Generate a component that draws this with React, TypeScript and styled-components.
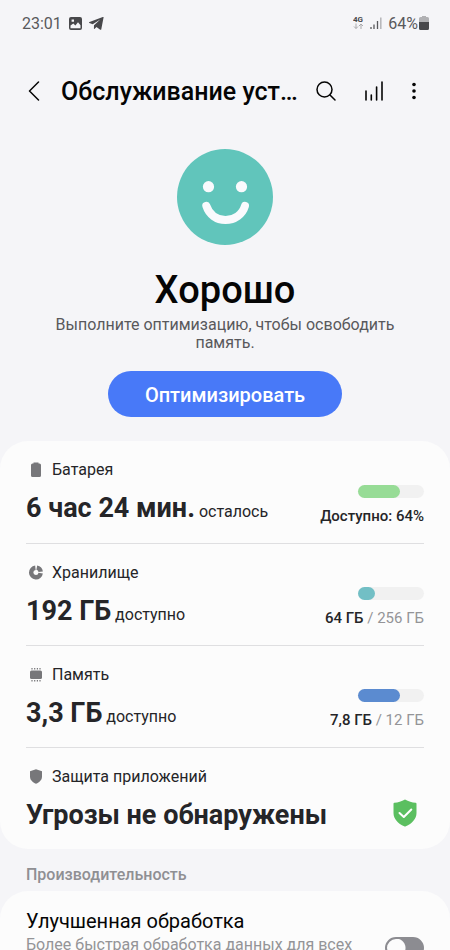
import React from 'react';
import styled, { createGlobalStyle } from 'styled-components';

const GlobalStyle = createGlobalStyle`
  *, *::before, *::after { box-sizing: border-box; }
  body { margin: 0; background: #f5f5f8; }
  h1, h2, p { margin: 0; }
  button { border: 0; padding: 0; background: none; color: inherit; font: inherit; cursor: pointer; }
`;

const Page = styled.div`
  height: 100vh;
  overflow-y: auto;
  scrollbar-width: none;
  background: #f5f5f8;
  color: #252528;
  font-family: Roboto, "Noto Sans", sans-serif;
`;

const StatusBar = styled.div`
  display: flex;
  justify-content: space-between;
  align-items: center;
  height: 46px;
  padding: 0 21px 0 22px;
  font-size: 16px;
  color: #59595c;
`;

const StatusGroup = styled.div<{ $gap: number }>`
  display: flex;
  align-items: center;
  gap: ${({ $gap }) => $gap}px;
`;

const Charge = styled.span`
  display: flex;
  align-items: center;
  gap: 1px;
`;

const AppBar = styled.header`
  display: flex;
  align-items: center;
  height: 90px;
  padding: 0 21px 0 18px;
  color: #050505;
`;

const BarTitle = styled.h1`
  flex: 1;
  min-width: 0;
  margin: 2px 4px 0 11px;
  font-size: 25px;
  line-height: 32px;
  font-weight: 500;
  white-space: nowrap;
  overflow: hidden;
  text-overflow: ellipsis;
`;

const IconButton = styled.button<{ $width: number }>`
  display: flex;
  align-items: center;
  justify-content: center;
  flex: none;
  width: ${({ $width }) => $width}px;
  height: 40px;
`;

const Summary = styled.section`
  display: flex;
  flex-direction: column;
  align-items: center;
  padding: 13px 40px 24px;
  text-align: center;
`;

const Verdict = styled.h2`
  margin-top: 23px;
  font-size: 38px;
  line-height: 44px;
  font-weight: 500;
  color: #050505;
`;

const Advice = styled.p`
  margin-top: 4px;
  font-size: 16px;
  line-height: 18px;
  color: #59595c;
`;

const OptimizeButton = styled.button`
  && {
    width: 234px;
    height: 46px;
    margin-top: 19px;
    padding-top: 1px;
    border-radius: 23px;
    background: #4879f8;
    color: #fff;
    font-size: 20px;
    font-weight: 500;
  }
`;

const Card = styled.section`
  padding: 0 26px;
  border-radius: 28px;
  background: #fcfcfc;
`;

const Row = styled.div`
  display: flex;
  justify-content: space-between;
  align-items: flex-end;
  height: 102px;
  padding: 18px 0;
  &:first-child { height: 103px; }
  &:last-child { height: 101px; }
  & + & { box-shadow: 0 -1px #dfdfe1; }
`;

const RowMain = styled.div`
  align-self: flex-start;
  white-space: nowrap;
`;

const RowLabel = styled.div`
  display: flex;
  align-items: center;
  gap: 6px;
  font-size: 16px;
  line-height: 22px;
`;

const RowValue = styled.div`
  margin-top: 11px;
  font-size: 16px;
  line-height: 32px;
`;

const Strong = styled.strong`
  font-size: 27px;
  font-weight: 700;
`;

const Usage = styled.div`
  display: flex;
  flex-direction: column;
  align-items: flex-end;
  gap: 8px;
  font-size: 15px;
  line-height: 20px;
  color: #949497;
  white-space: nowrap;
`;

const UsageStrong = styled.b`
  font-weight: 500;
  color: #252528;
`;

const Track = styled.div`
  width: 66px;
  height: 13px;
  border-radius: 7px;
  background: #f1f1f1;
`;

const Fill = styled.div<{ $color: string }>`
  height: 100%;
  border-radius: 7px;
  background: ${({ $color }) => $color};
`;

const ShieldSlot = styled.div`
  display: flex;
  padding: 0 7px 4px 0;
`;

const SectionTitle = styled.h2`
  padding: 10px 26px 0;
  height: 42px;
  font-size: 16px;
  line-height: 32px;
  font-weight: 500;
  color: #8f8f93;
`;

const Setting = styled.label`
  display: flex;
  justify-content: space-between;
  align-items: center;
  gap: 28px;
  padding: 16px 0;
`;

const SettingTitle = styled.span`
  display: block;
  font-size: 20px;
  line-height: 28px;
  color: #050505;
`;

const SettingNote = styled.span`
  display: block;
  font-size: 16px;
  line-height: 19px;
  color: #949497;
`;

const Toggle = styled.input`
  appearance: none;
  flex: none;
  width: 39px;
  height: 22px;
  margin: 16px 0 0;
  border: 2px solid #8c8c91;
  border-radius: 11px;
  background: radial-gradient(circle at 9px 9px, #fcfcfc 9px, #8c8c91 10px);
  &:checked { background: radial-gradient(circle at 26px 9px, #fcfcfc 9px, #4879f8 10px); border-color: #4879f8; }
`;

const PictureIcon = () => (
  <svg width="13" height="13" viewBox="0 0 13 13" aria-hidden="true">
    <path fillRule="evenodd" fill="#48484b" d="M2 0h9a2 2 0 0 1 2 2v9a2 2 0 0 1-2 2H2a2 2 0 0 1-2-2V2a2 2 0 0 1 2-2zM1.5 8.5v2.8h10V8.2L9 5.300 6.400 8.500 4.300 6.400zM2.600 2.400v2.400h2.400V2.400z" />
  </svg>
);

const PlaneIcon = () => (
  <svg width="15" height="13" viewBox="0 0 15 13" aria-hidden="true">
    <path fill="#48484b" d="M14.600.3 12.300 12.300c-.1.6-.6.7-1.100.4L7.500 10 5.700 11.800c-.4.400-.8.200-.8-.3L5 8.200 11.300 2.500 3.700 7.200.4 6.100C-.2 5.900-.1 5.400.5 5.100L13.800.1c.5-.2.900 0 .8.200z" />
  </svg>
);

const NetworkIcon = () => (
  <svg width="11" height="14" viewBox="0 0 11 14" aria-hidden="true">
    <text x="0" y="6" fontSize="8" fontWeight="700" fontFamily="Roboto, sans-serif" fill="#48484b">4G</text>
    <path d="M3 7.500v5M1 10.500l2 2 2-2M8 13V8M6 10l2-2 2 2" fill="none" stroke="#aaaaad" />
  </svg>
);

const SignalIcon = () => (
  <svg width="12" height="12" viewBox="0 0 12 12" aria-hidden="true">
    <path d="M1 10v2M4 7.500V12M7.500 4v8" stroke="#59595c" strokeWidth="1.300" />
    <path d="M10.800.5V12" stroke="#b5b5b8" strokeWidth="1.500" />
  </svg>
);

const ChargeIcon = () => (
  <svg width="10" height="14" viewBox="0 0 10 14" aria-hidden="true">
    <path d="M3 0h4v1h1.500A1.500 1.500 0 0 1 10 2.500V6H0V2.500A1.500 1.500 0 0 1 1.500 1H3z" fill="#b1b1b4" />
    <path d="M0 6h10v6.500A1.500 1.500 0 0 1 8.500 14h-7A1.500 1.500 0 0 1 0 12.500z" fill="#48484b" />
  </svg>
);

const BackIcon = () => (
  <svg width="12" height="20" viewBox="0 0 12 20" fill="none" stroke="currentColor" strokeWidth="1.500" strokeLinecap="round" strokeLinejoin="round" aria-hidden="true">
    <path d="M10.500 1 1.500 10l9 9" />
  </svg>
);

const SearchIcon = () => (
  <svg width="20" height="20" viewBox="0 0 20 20" fill="none" stroke="currentColor" strokeWidth="1.500" strokeLinecap="round" aria-hidden="true">
    <circle cx="8.500" cy="8.500" r="7.500" />
    <path d="m14 14 5 5" />
  </svg>
);

const ChartIcon = () => (
  <svg width="18" height="20" viewBox="0 0 18 20" fill="none" stroke="currentColor" strokeWidth="1.600" strokeLinecap="round" aria-hidden="true">
    <path d="M1 10v9M6.300 14v5M11.600 6v13M17 1v18" />
  </svg>
);

const MoreIcon = () => (
  <svg width="4" height="18" viewBox="0 0 4 18" fill="currentColor" aria-hidden="true">
    <circle cx="2" cy="2.500" r="1.800" />
    <circle cx="2" cy="9" r="1.800" />
    <circle cx="2" cy="15.500" r="1.800" />
  </svg>
);

const FaceIcon = () => (
  <svg width="96" height="96" viewBox="0 0 96 96" aria-hidden="true">
    <circle cx="48" cy="48" r="48" fill="#61c5bb" />
    <circle cx="31.500" cy="37.700" r="5.600" fill="#fafafd" />
    <circle cx="64.500" cy="37.700" r="5.600" fill="#fafafd" />
    <path d="M29.300 56.800C32 65.500 39.500 71 48.500 71S65.500 65.500 68 56.800" fill="none" stroke="#fafafd" strokeWidth="8" strokeLinecap="round" />
  </svg>
);

const BatteryIcon = () => (
  <svg width="20" height="16" viewBox="0 0 20 16" fill="#77777a" aria-hidden="true">
    <path d="M7.500 0.500h5v1H13.500A1.500 1.500 0 0 1 15 3v10.500A1.500 1.500 0 0 1 13.500 15h-7A1.500 1.500 0 0 1 5 13.500V3A1.500 1.500 0 0 1 6.500 1.500h1z" />
  </svg>
);

const StorageIcon = () => (
  <svg width="20" height="16" viewBox="0 0 20 16" fill="none" stroke="#77777a" strokeWidth="4.400" aria-hidden="true">
    <path d="M9.400 2.700A4.800 4.800 0 1 0 14.700 8.200" />
    <path d="M10.800 2.700A4.800 4.800 0 0 1 14.700 6.800" />
  </svg>
);

const MemoryIcon = () => (
  <svg width="20" height="16" viewBox="0 0 20 16" aria-hidden="true">
    <rect x="4" y="3.500" width="12" height="8.500" rx="1.500" fill="#77777a" />
    <path d="M6 1v1.500M8.700 1v1.500M11.400 1v1.500M14 1v1.500M6 13v1.500M8.700 13v1.500M11.400 13v1.500M14 13v1.500" stroke="#77777a" strokeWidth="1.200" />
  </svg>
);

const ShieldIcon = () => (
  <svg width="20" height="16" viewBox="0 0 20 16" fill="#77777a" aria-hidden="true">
    <path d="M10 0.300 16 2.300V7.500c0 3.500-2.500 5.700-6 7.300C6.500 13.200 4 11 4 7.500V2.300z" />
  </svg>
);

const SafeIcon = () => (
  <svg width="24" height="28" viewBox="0 0 24 28" aria-hidden="true">
    <path d="M12 .5c3.500 2 7 3 10.600 3.300.5 0 .9.400.9.900V14c0 6-4.500 10.500-10.700 13.300a2 2 0 0 1-1.600 0C5 24.500.5 20 .5 14V4.700c0-.5.4-.9.900-.9C5 3.500 8.500 2.500 12 .5z" fill="#5bbf60" />
    <path d="m6.500 14 4.300 4L18.300 10.500" fill="none" stroke="#fff" strokeWidth="2" strokeLinecap="round" strokeLinejoin="round" />
  </svg>
);

type MeterRowProps = {
  icon: React.ReactNode;
  label: string;
  value: string;
  suffix: string;
  percent: number;
  color: string;
  used: string;
  total?: string;
};

const MeterRow = ({ icon, label, value, suffix, percent, color, used, total }: MeterRowProps) => (
  <Row>
    <RowMain>
      <RowLabel>{icon}{label}</RowLabel>
      <RowValue><Strong>{value}</Strong> {suffix}</RowValue>
    </RowMain>
    <Usage>
      <Track><Fill $color={color} style={{ width: `${percent}%` }} /></Track>
      <span><UsageStrong>{used}</UsageStrong>{total && ` / ${total}`}</span>
    </Usage>
  </Row>
);

export default function App() {
  return (
    <Page>
      <GlobalStyle />
      <StatusBar>
        <StatusGroup $gap={7}>
          <span>23:01</span>
          <PictureIcon />
          <PlaneIcon />
        </StatusGroup>
        <StatusGroup $gap={6}>
          <NetworkIcon />
          <SignalIcon />
          <Charge>64%<ChargeIcon /></Charge>
        </StatusGroup>
      </StatusBar>
      <AppBar>
        <IconButton $width={32} aria-label="Назад"><BackIcon /></IconButton>
        <BarTitle>Обслуживание устройства</BarTitle>
        <IconButton $width={46} aria-label="Поиск"><SearchIcon /></IconButton>
        <IconButton $width={50} aria-label="Статистика"><ChartIcon /></IconButton>
        <IconButton $width={30} aria-label="Ещё"><MoreIcon /></IconButton>
      </AppBar>
      <main>
        <Summary>
          <FaceIcon />
          <Verdict>Хорошо</Verdict>
          <Advice>Выполните оптимизацию, чтобы освободить память.</Advice>
          <OptimizeButton>Оптимизировать</OptimizeButton>
        </Summary>
        <Card>
          <MeterRow icon={<BatteryIcon />} label="Батарея" value="6 час 24 мин." suffix="осталось" percent={64} color="#97dc96" used="Доступно: 64%" />
          <MeterRow icon={<StorageIcon />} label="Хранилище" value="192 ГБ" suffix="доступно" percent={26} color="#72bfc5" used="64 ГБ" total="256 ГБ" />
          <MeterRow icon={<MemoryIcon />} label="Память" value="3,3 ГБ" suffix="доступно" percent={64} color="#5b8bd0" used="7,8 ГБ" total="12 ГБ" />
          <Row>
            <RowMain>
              <RowLabel><ShieldIcon />Защита приложений</RowLabel>
              <RowValue><Strong>Угрозы не обнаружены</Strong></RowValue>
            </RowMain>
            <ShieldSlot><SafeIcon /></ShieldSlot>
          </Row>
        </Card>
        <SectionTitle>Производительность</SectionTitle>
        <Card>
          <Setting>
            <span>
              <SettingTitle>Улучшенная обработка</SettingTitle>
              <SettingNote>Более быстрая обработка данных для всех приложений.</SettingNote>
            </span>
            <Toggle type="checkbox" role="switch" />
          </Setting>
        </Card>
      </main>
    </Page>
  );
}
